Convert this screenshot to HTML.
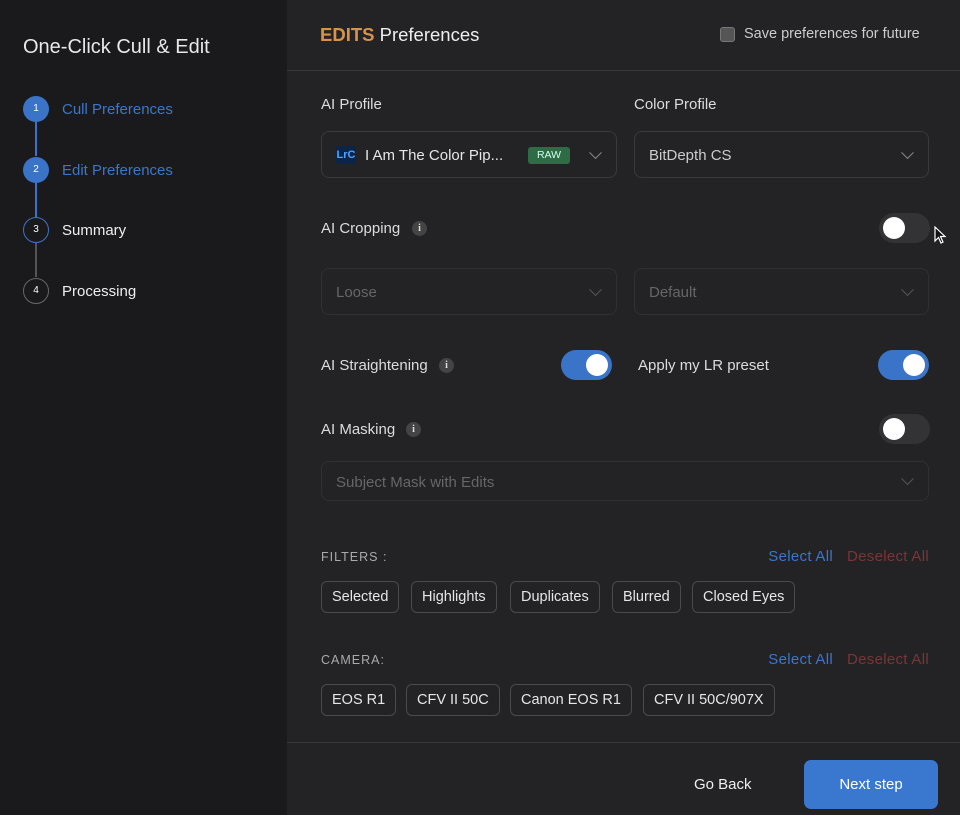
<!DOCTYPE html>
<html><head><style>
*{margin:0;padding:0;box-sizing:border-box}
body{width:960px;height:815px;background:#232325;font-family:"Liberation Sans",sans-serif;position:relative;overflow:hidden;color:#e6e6e6}
.a{position:absolute}
.side{left:0;top:0;width:287px;height:815px;background:#1a1a1c}
.step{left:23px;width:26px;height:26px;border-radius:50%;font-size:10px;text-align:center;line-height:26px;color:#fff}
.sl{left:62px;font-size:15px}
.vl{left:35px;width:2px;height:34px}
.lab{font-size:15px;color:#dcdcdc}
.dd{border:1px solid #3a3a3d;border-radius:8px;height:47px}
.dd.dis{border-color:#303033}
.chev{position:absolute;right:16px;top:50%;width:9px;height:9px;border-right:1.5px solid #888;border-bottom:1.5px solid #888;transform:translateY(-75%) rotate(45deg)}
.tg{width:51px;height:30px;border-radius:15px;background:#333336}
.tg i{position:absolute;top:4px;left:4px;width:22px;height:22px;border-radius:50%;background:#fff}
.tg.on{background:#3a74c8}.tg.on i{left:25px}
.info{width:15px;height:15px;border-radius:50%;background:#444;color:#ddd;font-size:10px;font-weight:bold;text-align:center;line-height:15px;font-family:"Liberation Serif",serif}
.chip{height:32px;border:1px solid #4a4a4d;border-radius:6px;font-size:14.5px;line-height:31px;padding:0 10px;color:#e6e6e6}
.cap{font-size:12.5px;color:#aaa;letter-spacing:1px}
.sa{font-size:15px;color:#3b76c9;letter-spacing:0.3px}.da{font-size:15px;color:#7a3537;letter-spacing:0.3px}
</style></head><body>
<div class="a side"></div>
<div class="a" style="left:23px;top:36px;font-size:20px;color:#e8e8e8">One-Click Cull &amp; Edit</div>
<div class="a step" style="top:96px;background:#3a74c8">1</div>
<div class="a vl" style="top:122px;background:#3a74c8"></div>
<div class="a step" style="top:157px;background:#3a74c8">2</div>
<div class="a vl" style="top:183px;background:#3a74c8"></div>
<div class="a step" style="top:217px;border:1.5px solid #3a74c8;line-height:23px">3</div>
<div class="a vl" style="top:243px;background:#555"></div>
<div class="a step" style="top:278px;border:1.5px solid #666;line-height:23px">4</div>
<div class="a sl" style="top:101px;color:#3b76c9">Cull Preferences</div>
<div class="a sl" style="top:162px;color:#3b76c9">Edit Preferences</div>
<div class="a sl" style="top:222px;color:#eee">Summary</div>
<div class="a sl" style="top:283px;color:#eee">Processing</div>

<div class="a" style="left:320px;top:24px;font-size:18.5px"><b style="color:#d8924a">EDITS</b> <span style="color:#eee">Preferences</span></div>
<div class="a" style="left:720px;top:27px;width:15px;height:15px;border-radius:3px;background:#555;border:1px solid #777"></div>
<div class="a" style="left:744px;top:26px;font-size:14.5px;color:#ccc">Save preferences for future</div>
<div class="a" style="left:287px;top:70px;width:673px;height:1px;background:#38383b"></div>

<div class="a lab" style="left:321px;top:96px">AI Profile</div>
<div class="a lab" style="left:634px;top:96px">Color Profile</div>
<div class="a dd" style="left:321px;top:131px;width:296px">
 <div class="a" style="left:14px;top:14px;width:20px;height:18px;background:#0b2447;color:#4ea3ff;font-size:11px;font-weight:bold;text-align:center;line-height:18px;border-radius:2px">LrC</div>
 <div class="a" style="left:43px;top:15px;font-size:15px">I Am The Color Pip...</div>
 <div class="a" style="left:206px;top:15px;width:42px;height:17px;background:#2f6b45;border-radius:3px;font-size:10.5px;color:#cfe;text-align:center;line-height:17px">RAW</div>
 <div class="chev"></div></div>
<div class="a dd" style="left:634px;top:131px;width:295px"><div class="a" style="left:14px;top:15px;font-size:15px;color:#ccc">BitDepth CS</div><div class="chev"></div></div>

<div class="a lab" style="left:321px;top:220px">AI Cropping</div>
<div class="a info" style="left:412px;top:221px">i</div>
<div class="a tg" style="left:879px;top:213px"><i></i></div>
<div class="a dd dis" style="left:321px;top:268px;width:296px"><div class="a" style="left:14px;top:15px;font-size:15px;color:#666">Loose</div><div class="chev" style="border-color:#555"></div></div>
<div class="a dd dis" style="left:634px;top:268px;width:295px"><div class="a" style="left:14px;top:15px;font-size:15px;color:#666">Default</div><div class="chev" style="border-color:#555"></div></div>

<div class="a lab" style="left:321px;top:357px">AI Straightening</div>
<div class="a info" style="left:439px;top:358px">i</div>
<div class="a tg on" style="left:561px;top:350px"><i></i></div>
<div class="a lab" style="left:638px;top:357px">Apply my LR preset</div>
<div class="a tg on" style="left:878px;top:350px"><i></i></div>

<div class="a lab" style="left:321px;top:421px">AI Masking</div>
<div class="a info" style="left:406px;top:422px">i</div>
<div class="a tg" style="left:879px;top:414px"><i></i></div>
<div class="a dd dis" style="left:321px;top:461px;width:608px;height:40px"><div class="a" style="left:14px;top:12px;font-size:15px;color:#666">Subject Mask with Edits</div><div class="chev" style="border-color:#555"></div></div>

<div class="a cap" style="left:321px;top:550px">FILTERS :</div>
<div class="a sa" style="right:127px;top:548px">Select All</div>
<div class="a da" style="right:31px;top:548px">Deselect All</div>
<div class="a chip" style="left:321px;top:581px">Selected</div>
<div class="a chip" style="left:411px;top:581px">Highlights</div>
<div class="a chip" style="left:510px;top:581px">Duplicates</div>
<div class="a chip" style="left:612px;top:581px">Blurred</div>
<div class="a chip" style="left:692px;top:581px">Closed Eyes</div>

<div class="a cap" style="left:321px;top:653px">CAMERA:</div>
<div class="a sa" style="right:127px;top:651px">Select All</div>
<div class="a da" style="right:31px;top:651px">Deselect All</div>
<div class="a chip" style="left:321px;top:684px">EOS R1</div>
<div class="a chip" style="left:406px;top:684px">CFV II 50C</div>
<div class="a chip" style="left:510px;top:684px">Canon EOS R1</div>
<div class="a chip" style="left:643px;top:684px">CFV II 50C/907X</div>

<div class="a" style="left:287px;top:742px;width:673px;height:1px;background:#38383b"></div>
<div class="a" style="left:694px;top:776px;font-size:15px;color:#eee">Go Back</div>
<div class="a" style="left:804px;top:760px;width:134px;height:49px;background:#3a78d0;border-radius:7px;color:#fff;font-size:15px;text-align:center;line-height:50px">Next step</div>
<svg class="a" style="left:934px;top:226px" width="14" height="20" viewBox="0 0 14 20"><path d="M1 1 L1 15 L4.5 11.5 L7 17 L9 16 L6.5 10.5 L11 10.5 Z" fill="#111" stroke="#fff" stroke-width="1.2"/></svg>
</body></html>
